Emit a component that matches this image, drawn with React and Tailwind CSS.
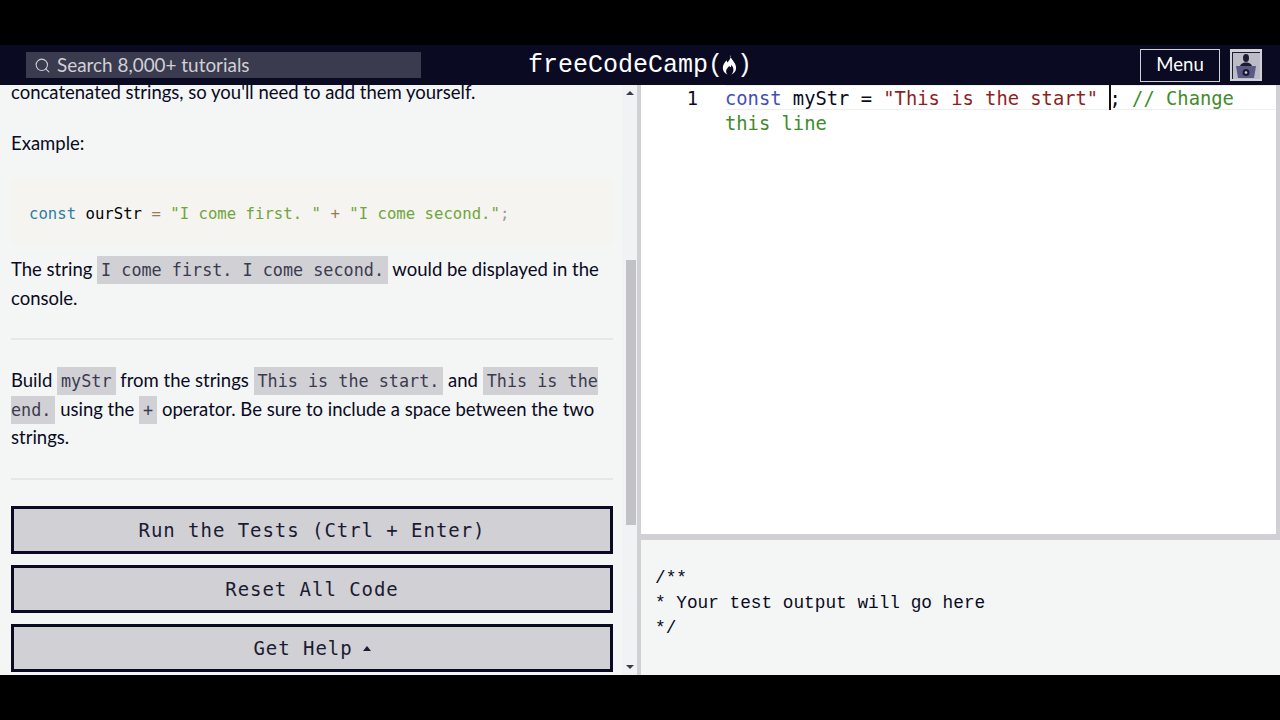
import React from 'react';
import { Search } from 'lucide-react';

const lato = { fontFamily: 'Lato, sans-serif' };

const Code = ({ children }) => (
  <code className="bg-[#d0d0d5] px-1 py-[4px] font-['DejaVu_Sans_Mono',monospace] text-[16.8px] leading-none text-[#3b3b4f]">
    {children}
  </code>
);

const ActionButton = ({ children }) => (
  <button className="flex h-[48px] w-full items-center justify-center border-[3px] border-[#0a0a23] bg-[#d0d0d5] pt-[2px] font-['DejaVu_Sans_Mono',monospace] text-[19px] tracking-[0.95px] text-[#1b1b32]">
    {children}
  </button>
);

const Flame = () => (
  <svg width="16" height="20" viewBox="0 0 16 20" className="-ml-[1px] -mr-[1px]">
    <path
      fill="#ffffff"
      d="M8.500 0.500c0.500 3.200-1.500 4.800-3 7-0.500-0.600-0.800-1.300-0.800-2.200C2.400 7.500 0.800 10.200 0.800 13c0 3 2 5.500 4.700 6.500-1.300-1.400-1.700-2.900-1.200-4.500 0.500-1.500 1.800-2.700 3-4.300 0.300 1.100 0.800 1.600 1.500 1.400 0.500-0.800 0.500-1.600 0.300-2.400 1.500 1.500 2.600 3.500 2.300 5.700-0.200 1.700-1 3-2.200 4.100 2.800-1 4.900-3.400 4.900-6.500 0-4.600-3.700-7.700-6.400-12z"
    />
  </svg>
);

const Avatar = () => (
  <svg width="32" height="32" viewBox="0 0 32 32">
    <rect width="32" height="32" fill="#d0d0d5" />
    <rect x="2" y="3" width="28" height="27" fill="#1b1b32" />
    <rect x="3" y="4" width="27" height="26" fill="#bcbcc8" />
    <ellipse cx="16" cy="9" rx="3" ry="4" fill="#1b1b32" />
    <path d="M10 18c0-3 2.500-4.500 6-4.500s6 1.500 6 4.500z" fill="#1b1b32" />
    <path d="M6 17h20l-2 12H8z" fill="#5a5a86" />
    <circle cx="16" cy="23.500" r="3.500" fill="#1b1b32" />
    <circle cx="16" cy="23.500" r="1.300" fill="#d0d0d5" />
  </svg>
);

const Scrollbar = () => (
  <div className="flex w-[15px] shrink-0 flex-col items-center bg-[#f1f2f3]">
    <div className="flex h-[16px] shrink-0 items-center justify-center">
      <div className="h-0 w-0 border-x-[4px] border-b-[4px] border-x-transparent border-b-[#3b3b4f]" />
    </div>
    <div className="h-[159px] shrink-0" />
    <div className="ml-[4px] h-[265px] w-[10px] shrink-0 self-start bg-[#c1c1c6]" />
    <div className="flex-1" />
    <div className="flex h-[16px] shrink-0 items-center justify-center">
      <div className="h-0 w-0 border-x-[4px] border-t-[4px] border-x-transparent border-t-[#3b3b4f]" />
    </div>
  </div>
);

export default function App() {
  return (
    <div className="flex h-[720px] w-[1280px] flex-col overflow-hidden bg-black" style={lato}>
      <div className="h-[45px] shrink-0" />

      <nav className="grid h-[40px] shrink-0 grid-cols-[1fr_auto_1fr] items-center bg-[#0a0a23] pl-[26px] pr-[18px]">
        <div className="flex h-[26px] w-[395px] items-center gap-[6px] bg-[#3b3b4f] pl-[8px] text-[18.9px] text-[#d0d0d5]">
          <Search size={17} strokeWidth={1.500} />
          <span>Search 8,000+ tutorials</span>
        </div>
        <div className="-ml-[8px] flex items-center font-['Liberation_Mono',monospace] text-[25px] leading-none text-white">
          <span>freeCodeCamp(</span>
          <Flame />
          <span>)</span>
        </div>
        <div className="flex items-center justify-end gap-[10px]">
          <div className="flex h-[33px] w-[80px] items-center justify-center border border-[#d0d0d5] text-[18.6px] text-white">
            Menu
          </div>
          <Avatar />
        </div>
      </nav>

      <main className="flex h-[590px] shrink-0">
        <section className="flex w-[637px] shrink-0 overflow-hidden bg-[#f3f6f5]">
          <div className="min-w-0 flex-1 overflow-hidden pl-[11px] pr-[9px] text-[18.5px] leading-[28.5px] text-[#0a0a23]">
            <p className="-mt-[7px]">concatenated strings, so you'll need to add them yourself.</p>
            <p className="mt-[22px]">Example:</p>
            <pre className="mt-[22px] h-[66px] bg-[#f5f4f1] px-[18px] pt-[23px] font-['DejaVu_Sans_Mono',monospace] text-[15.65px] leading-[24px] text-[#000000]">
              <span className="text-[#2a7f9e]">const</span> ourStr <span className="text-[#9a7a50]">=</span>{' '}
              <span className="text-[#6fa53a]">"I come first. "</span> <span className="text-[#9a7a50]">+</span>{' '}
              <span className="text-[#6fa53a]">"I come second."</span>
              <span className="text-[#999]">;</span>
            </pre>
            <p className="mt-[10px]">
              The string <Code>I come first. I come second.</Code> would be displayed in the console.
            </p>
            <hr className="mt-[26px] border-t-2 border-[#e6e8e8]" />
            <p className="mt-[26px]">
              Build <Code>myStr</Code> from the strings <Code>This is the start.</Code> and{' '}
              <Code>This is the end.</Code> using the <Code>+</Code> operator. Be sure to include a space between the two
              strings.
            </p>
            <hr className="mt-[26px] border-t-2 border-[#e6e8e8]" />
            <div className="mt-[26px] flex flex-col gap-[11px]">
              <ActionButton>Run the Tests (Ctrl + Enter)</ActionButton>
              <ActionButton>Reset All Code</ActionButton>
              <ActionButton>
                Get Help
                <span className="ml-[10px] h-0 w-0 border-x-[4px] border-b-[5px] border-x-transparent border-b-[#1b1b32]" />
              </ActionButton>
            </div>
          </div>
          <Scrollbar />
        </section>

        <div className="w-[4px] shrink-0 bg-[#d0d0d5]" />

        <section className="flex min-w-0 flex-1 flex-col">
          <div className="flex h-[449px] shrink-0 bg-white font-['DejaVu_Sans_Mono',monospace] text-[18.8px] leading-[25px]">
            <div className="w-[57px] shrink-0 pt-[1px] text-right text-[#0a0a23]">1</div>
            <div className="relative ml-[27px] min-w-0 flex-1">
              <div className="absolute inset-x-0 top-0 h-[25px] border-y border-[#eeeeee]" />
              <div className="absolute left-[384px] top-0 h-[25px] w-[2px] bg-[#111111]" />
              <p className="relative w-[545px] whitespace-pre-wrap pt-[1px] text-[#0a0a23]">
                <span className="text-[#3f51b5]">const</span> myStr = <span className="text-[#8f1f1f]">"This is the start"</span>{' '}
                ; <span className="text-[#3f8c2a]">// Change this line</span>
              </p>
            </div>
            <div className="w-[4px] shrink-0 bg-[#d0d0d5]" />
          </div>
          <div className="h-[6px] shrink-0 bg-[#d0d0d5]" />
          <pre className="flex-1 bg-[#f3f6f5] pl-[14px] pt-[26px] font-['Liberation_Mono',monospace] text-[17.75px] leading-[25px] text-[#0a0a23]">
            {'/**\n* Your test output will go here\n*/'}
          </pre>
        </section>
      </main>

      <div className="flex-1" />
    </div>
  );
}
